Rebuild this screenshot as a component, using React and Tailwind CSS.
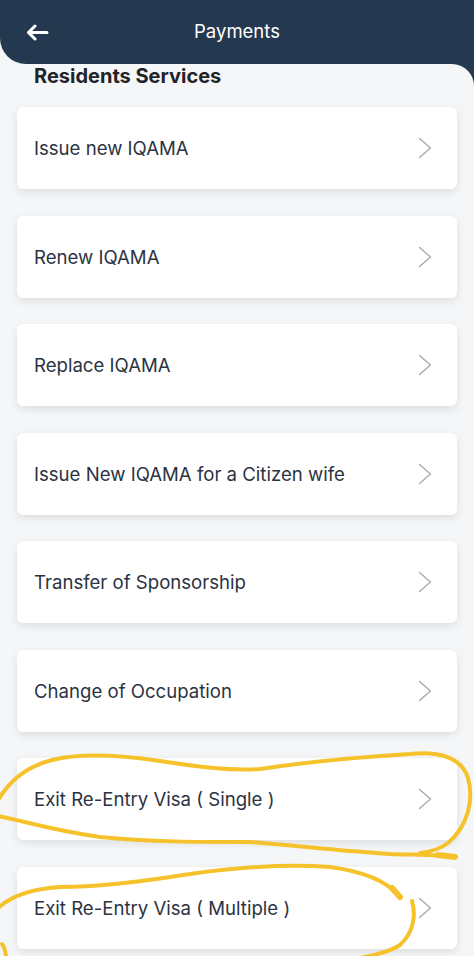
const services = [
  'Issue new IQAMA',
  'Renew IQAMA',
  'Replace IQAMA',
  'Issue New IQAMA for a Citizen wife',
  'Transfer of Sponsorship',
  'Change of Occupation',
  'Exit Re-Entry Visa ( Single )',
  'Exit Re-Entry Visa ( Multiple )',
];

const Chevron = () => (
  <svg width="14" height="22" viewBox="0 0 14 22" fill="none" stroke="#a7aaaf" strokeWidth="1.4" strokeLinecap="round" strokeLinejoin="round">
    <path d="M1.5 1.5 L12.5 11 L1.5 20.5" />
  </svg>
);

const Scribbles = () => (
  <svg
    className="absolute left-0 top-0 pointer-events-none"
    width="474"
    height="956"
    viewBox="0 0 474 956"
    fill="none"
    stroke="#f6c22c"
    strokeLinecap="round"
    strokeLinejoin="round"
  >
    {/* Single */}
    <path
      strokeWidth="4"
      d="M-2 800 C 8 784, 22 768, 52 760 C 80 753, 120 755, 160 761 C 200 767, 230 771, 260 769 C 300 763, 360 757, 410 754 C 440 751, 462 758, 468 778 C 474 800, 468 826, 448 843 C 440 849, 430 852, 420 853"
    />
    <path
      strokeWidth="4"
      d="M-2 816 C 20 820, 50 830, 100 837 C 150 842, 200 842, 250 842 C 300 846, 340 851, 390 854 C 420 855, 440 855, 455 857"
    />
    <path strokeWidth="6" d="M438 855 L455 857" />
    {/* Multiple */}
    <path
      strokeWidth="4"
      d="M-2 908 C 10 897, 30 889, 60 887 C 100 887, 140 882, 190 874 C 240 867, 290 864, 330 867 C 360 871, 385 880, 398 895"
    />
    <path strokeWidth="6" d="M392 888 L400 897" />
    <path
      strokeWidth="4"
      d="M412 901 C 416 915, 414 932, 400 945 C 390 952, 370 956, 350 960"
    />
    <path strokeWidth="4" d="M2 944 C 5 948, 6 952, 6 960" />
  </svg>
);

const App = () => {
  return (
    <div
      className="relative w-[474px] h-[956px] overflow-hidden flex flex-col bg-[linear-gradient(to_right,#f5f6f8_50%,#243850_50%)]"
      style={{ fontFamily: 'Inter, "Noto Sans", sans-serif' }}
    >
      <div className="h-16 shrink-0 bg-[#243850] rounded-bl-[26px] flex items-center relative">
        <svg
          className="absolute left-[26px] top-[24px]"
          width="23"
          height="17"
          viewBox="0 0 23 17"
          fill="none"
          stroke="white"
          strokeWidth="3"
          strokeLinecap="round"
          strokeLinejoin="round"
        >
          <path d="M21 8.5 H2.5 M9 2 L2.5 8.5 L9 15" />
        </svg>
        <h1 className="w-full text-center text-white text-[18.5px]">Payments</h1>
      </div>
      <div className="flex-1 bg-[#f5f6f8] rounded-tr-[22px]">
        <h2 className="px-[34px] text-[20px] leading-6 font-bold text-[#1f2428]">Residents Services</h2>
        <div className="mt-[19px] flex flex-col gap-[26.5px] px-[17px]">
          {services.map((s) => (
            <div
              key={s}
              className="h-[82px] bg-white rounded-md shadow-[0_3px_8px_rgba(0,0,0,0.10)] flex items-center justify-between pl-[17px] pr-[25px]"
            >
              <span className="text-[18.6px] text-[#2b3342] pt-0.5">{s}</span>
              <Chevron />
            </div>
          ))}
        </div>
      </div>
      <Scribbles />
    </div>
  );
};

export default App;
